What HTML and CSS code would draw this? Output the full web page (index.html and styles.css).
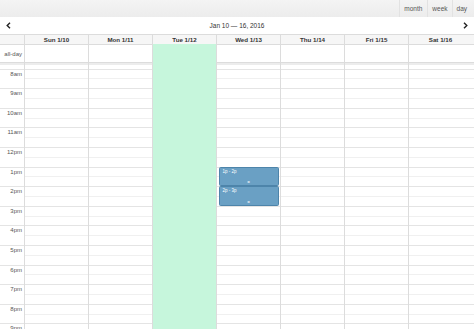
FILE: index.html
```html
<!DOCTYPE html>
<html>
<head>
<meta charset="utf-8">
<link rel="stylesheet" href="styles.css">
</head>
<body>
<div class="topbar">
  <div class="btns">
    <span class="btn">month</span>
    <span class="btn">week</span>
    <span class="btn">day</span>
  </div>
</div>
<div class="toolbar">
  <span class="nav"><svg width="5" height="7" viewBox="0 0 5 7"><polyline points="4,0.8 1.2,3.5 4,6.2" fill="none" stroke="#222" stroke-width="1.4"/></svg></span>
  <span class="title">Jan 10 — 16, 2016</span>
  <span class="nav right"><svg width="5" height="7" viewBox="0 0 5 7"><polyline points="1,0.8 3.8,3.5 1,6.2" fill="none" stroke="#222" stroke-width="1.4"/></svg></span>
</div>
<div class="hdr">
  <div class="ax"></div>
  <div class="d">Sun 1/10</div>
  <div class="d">Mon 1/11</div>
  <div class="d">Tue 1/12</div>
  <div class="d">Wed 1/13</div>
  <div class="d">Thu 1/14</div>
  <div class="d">Fri 1/15</div>
  <div class="d">Sat 1/16</div>
</div>
<div class="body">
  <div class="rows">
    <div class="allday"><span class="lbl">all-day</span></div>
    <div class="divider"></div>
    <div class="slat first"></div>
    <div class="slat"><span class="lbl">8am</span><span class="ln"></span></div>
    <div class="slat minor"><span class="lbl"></span><span class="ln"></span></div>
    <div class="slat"><span class="lbl">9am</span><span class="ln"></span></div>
    <div class="slat minor"><span class="lbl"></span><span class="ln"></span></div>
    <div class="slat"><span class="lbl">10am</span><span class="ln"></span></div>
    <div class="slat minor"><span class="lbl"></span><span class="ln"></span></div>
    <div class="slat"><span class="lbl">11am</span><span class="ln"></span></div>
    <div class="slat minor"><span class="lbl"></span><span class="ln"></span></div>
    <div class="slat"><span class="lbl">12pm</span><span class="ln"></span></div>
    <div class="slat minor"><span class="lbl"></span><span class="ln"></span></div>
    <div class="slat"><span class="lbl">1pm</span><span class="ln"></span></div>
    <div class="slat minor"><span class="lbl"></span><span class="ln"></span></div>
    <div class="slat"><span class="lbl">2pm</span><span class="ln"></span></div>
    <div class="slat minor"><span class="lbl"></span><span class="ln"></span></div>
    <div class="slat"><span class="lbl">3pm</span><span class="ln"></span></div>
    <div class="slat minor"><span class="lbl"></span><span class="ln"></span></div>
    <div class="slat"><span class="lbl">4pm</span><span class="ln"></span></div>
    <div class="slat minor"><span class="lbl"></span><span class="ln"></span></div>
    <div class="slat"><span class="lbl">5pm</span><span class="ln"></span></div>
    <div class="slat minor"><span class="lbl"></span><span class="ln"></span></div>
    <div class="slat"><span class="lbl">6pm</span><span class="ln"></span></div>
    <div class="slat minor"><span class="lbl"></span><span class="ln"></span></div>
    <div class="slat"><span class="lbl">7pm</span><span class="ln"></span></div>
    <div class="slat minor"><span class="lbl"></span><span class="ln"></span></div>
    <div class="slat"><span class="lbl">8pm</span><span class="ln"></span></div>
    <div class="slat minor"><span class="lbl"></span><span class="ln"></span></div>
    <div class="slat"><span class="lbl">9pm</span><span class="ln"></span></div>
    <div class="slat minor"><span class="lbl"></span><span class="ln"></span></div>
  </div>
  <div class="cols">
    <div class="ax"></div>
    <div class="col"></div>
    <div class="col"></div>
    <div class="col today"></div>
    <div class="col">
      <div class="ev ev1"><span class="evt">1p - 2p</span><span class="rz">=</span></div>
      <div class="ev ev2"><span class="evt">2p - 3p</span><span class="rz">=</span></div>
    </div>
    <div class="col"></div>
    <div class="col"></div>
    <div class="col"></div>
  </div>
</div>
</body>
</html>
```
FILE: styles.css
```css
* { box-sizing: border-box; }
html, body { margin: 0; padding: 0; }
body {
  width: 474px;
  height: 329px;
  overflow: hidden;
  background: #fff;
  font-family: "Liberation Sans", Arial, sans-serif;
  font-size: 6.5px;
  color: #333;
}
.topbar {
  height: 17px;
  background: linear-gradient(#f4f4f4, #ececec);
  display: flex;
  justify-content: flex-end;
  padding-right: 3px;
}
.btns { display: flex; }
.btn {
  line-height: 17px;
  padding: 0 4px;
  border-left: 1px solid #e2e2e2;
  color: #555;
}
.btn:first-child { padding: 0 5px 0 4px; }
.toolbar {
  height: 17px;
  display: grid;
  grid-template-columns: 1fr auto 1fr;
  align-items: center;
  padding: 0 6px;
}
.nav { display: flex; }
.nav svg { display: block; }
.nav.right { justify-content: flex-end; }
.title { color: #333; font-size: 6.5px; }
.hdr {
  display: flex;
  height: 10px;
  border-top: 1px solid #dcdcdc;
  background: #f6f6f6;
}
.hdr .ax { width: 24px; }
.hdr .d {
  width: 64px;
  border-left: 1px solid #dcdcdc;
  text-align: center;
  font-weight: bold;
  line-height: 9px;
  color: #333;
  font-size: 6.2px;
}
.body { display: grid; }
.body > .rows, .body > .cols { grid-area: 1 / 1; }
.rows { display: flex; flex-direction: column; }
.allday {
  height: 18px;
  border-top: 1px solid #dcdcdc;
  display: flex;
  align-items: center;
}
.lbl {
  width: 24px;
  flex: none;
  text-align: right;
  padding-right: 2px;
  color: #555;
  font-size: 6px;
}
.divider {
  height: 3px;
  background: #ececec;
  border-top: 1px solid #dcdcdc;
}
.slat { display: flex; height: 9.8px; }
.slat.first { height: 3.6px; }
.slat .lbl {
  border-top: 1px solid #e4e4e4;
  line-height: 8.8px;
}
.slat .ln { flex: 1; border-top: 1px solid #e4e4e4; }
.slat.minor .lbl { border-top-color: transparent; }
.slat.minor .ln { border-top-color: #f0f0f0; }
.cols { display: flex; }
.cols .ax { width: 24px; }
.col {
  width: 64px;
  border-left: 1px solid #dcdcdc;
  position: relative;
}
.col.today { background: #c6f6dc; }
.ev {
  position: absolute;
  left: 1.5px;
  right: 1.5px;
  height: 19.4px;
  background: #6aa0c4;
  border: 1px solid #4d84aa;
  border-radius: 1.5px;
  color: #fff;
  display: flex;
  flex-direction: column;
  justify-content: space-between;
  padding: 1px 3px 0;
}
.ev1 { top: 122.8px; }
.ev2 { top: 142.4px; }
.evt { font-size: 4.5px; line-height: 5px; }
.rz { font-size: 4.5px; line-height: 5px; text-align: center; }
```
